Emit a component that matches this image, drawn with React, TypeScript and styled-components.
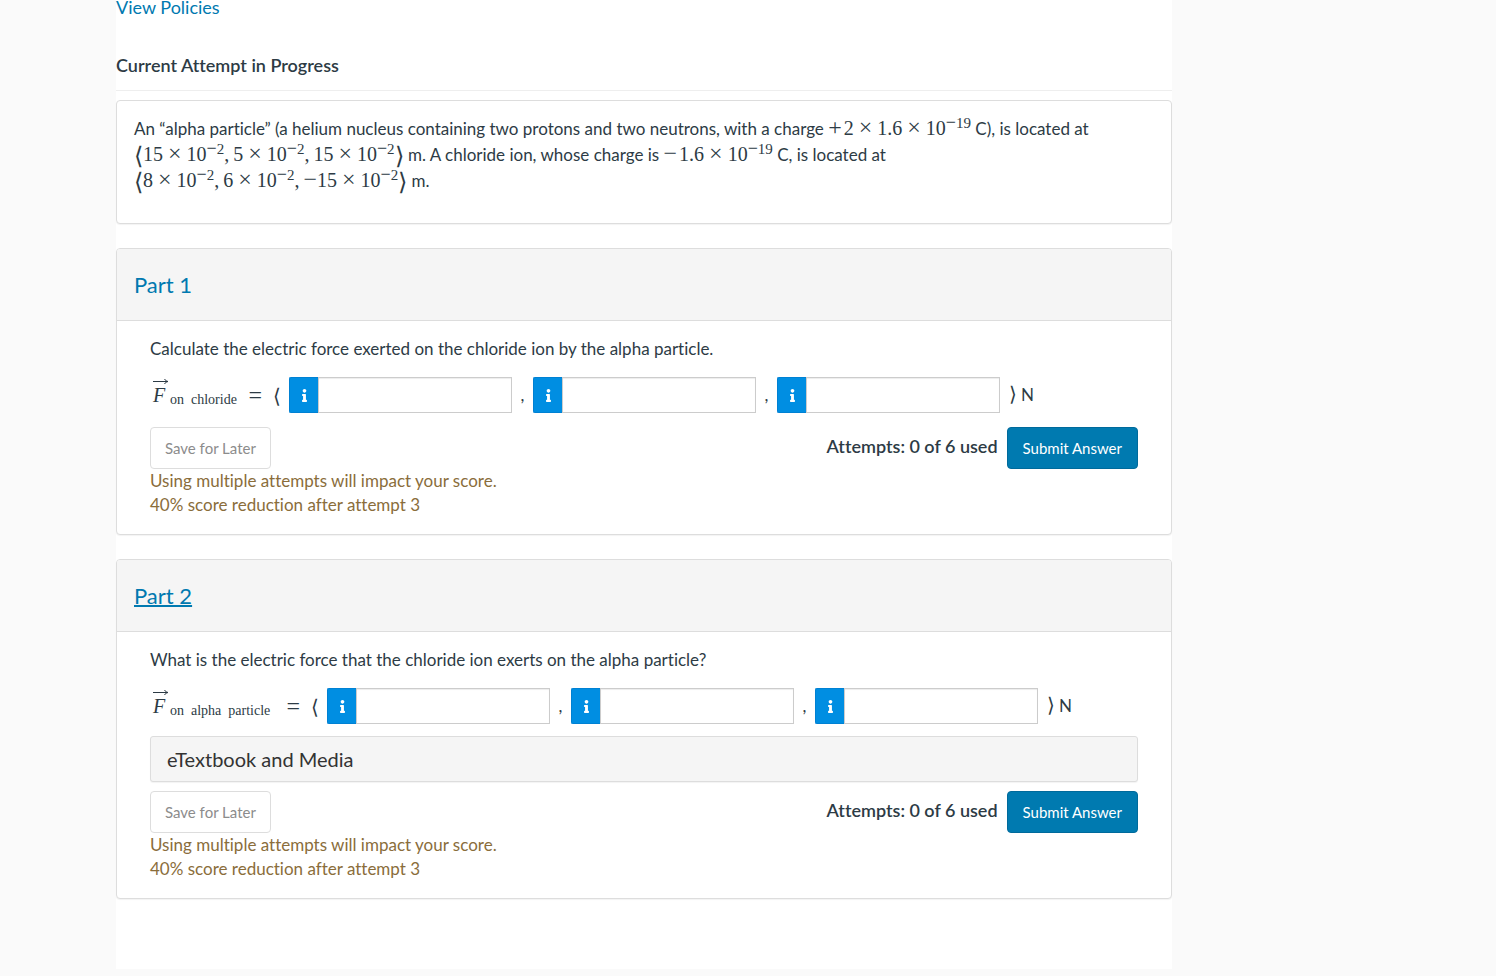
import React from 'react';
import styled, { createGlobalStyle } from 'styled-components';
import { FaInfo } from 'react-icons/fa';

const GlobalStyle = createGlobalStyle`
  * { box-sizing: border-box; }
  body {
    margin: 0;
    background: #fafafa;
    color: #2d3b45;
    font-family: Lato, sans-serif;
    font-size: 17px;
    font-variant-ligatures: none;
    line-height: 24px;
  }
`;

const Page = styled.main`
  margin: 0 324px 7px 116px;
  padding-bottom: 70px;
  background: #fff;
`;

const PolicyLink = styled.a`
  display: block;
  width: fit-content;
  font-size: 18px;
  line-height: 14px;
  color: #0079b0;
  text-decoration: none;
`;

const AttemptHeading = styled.h2`
  margin: 39px 0 9px;
  padding-bottom: 13px;
  border-bottom: 1px solid #eee;
  font-size: 18px;
  font-weight: 600;
  line-height: 24px;
`;

const Card = styled.section`
  margin-bottom: 24px;
  background: #fff;
  border: 1px solid #ddd;
  border-radius: 4px;
  box-shadow: 0 1px 1px rgba(0, 0, 0, 0.05);
  &:last-child { margin-bottom: 0; }
`;

const Statement = styled.p`
  margin: 0;
  padding: 15px 17px 29px;
  line-height: 26px;
`;

const MathText = styled.span`
  font-family: 'Liberation Serif', serif;
  font-size: 20px;
  line-height: 20px;
  white-space: nowrap;
`;

const Operator = styled.span<{ $before?: number; $after?: number }>`
  margin-left: ${(p) => p.$before ?? 0}px;
  margin-right: ${(p) => p.$after ?? 0}px;
  font-size: 24px;
  line-height: 0;
`;

const Separator = styled.span`
  margin-right: 4px;
`;

const Power = styled.sup`
  font-size: 15px;
  line-height: 0;
  vertical-align: 7px;
`;

const PowerSign = styled.span`
  font-size: 18px;
`;

const Bracket = styled.span<{ $large?: boolean }>`
  font-family: 'DejaVu Sans', sans-serif;
  font-weight: 200;
  font-size: ${(p) => (p.$large ? 24 : 20)}px;
  line-height: 0;
  vertical-align: ${(p) => (p.$large ? '-3px' : 'baseline')};
`;

const PartHeader = styled.h3`
  display: flex;
  align-items: center;
  height: 72px;
  margin: 0;
  padding: 0 17px;
  background: #f5f5f5;
  border-bottom: 1px solid #ddd;
  border-radius: 3px 3px 0 0;
  font-size: 22px;
  font-weight: 400;
  line-height: 28px;
`;

const PartLink = styled.a<{ $underlined?: boolean }>`
  color: #0079b0;
  text-decoration: ${(p) => (p.$underlined ? 'underline' : 'none')};
  text-decoration-thickness: 2px;
`;

const PartBody = styled.div`
  padding: 16px 33px 17px;
`;

const Question = styled.p`
  margin: 0 0 16px;
`;

const AnswerRow = styled.div<{ $gap: number }>`
  display: flex;
  align-items: center;
  height: 36px;
  margin-bottom: ${(p) => p.$gap}px;
`;

const Formula = styled.div<{ $wide?: boolean }>`
  display: flex;
  align-items: center;
  width: ${(p) => (p.$wide ? 177 : 139)}px;
  padding-left: 3px;
  font-family: 'Liberation Serif', serif;
  font-size: 20px;
`;

const Vector = styled.span`
  position: relative;
  width: 17px;
  font-style: italic;
`;

const VectorArrow = styled.svg`
  position: absolute;
  top: -5px;
  left: 0;
`;

const Subscript = styled.span`
  display: flex;
  flex: 1;
  gap: 7px;
  padding-top: 9px;
  font-size: 14px;
  line-height: 14px;
`;

const Relation = styled.span`
  display: flex;
  align-items: baseline;
  gap: 11px;
  padding-right: 8px;
`;

const Field = styled.div`
  display: flex;
  width: 223px;
  height: 36px;
`;

const InfoButton = styled.button`
  display: flex;
  align-items: center;
  justify-content: center;
  width: 29px;
  padding: 0;
  border: 1px solid #0081d3;
  border-right: 0;
  border-radius: 2px 0 0 2px;
  background: #008ee2;
  color: #fff;
  font-size: 13px;
`;

const ValueInput = styled.input`
  flex: 1;
  min-width: 0;
  padding: 0 8px;
  border: 1px solid #ccc;
  border-radius: 0;
  background: #fff;
  box-shadow: inset 0 1px 1px rgba(0, 0, 0, 0.075);
  font: inherit;
`;

const Comma = styled.span`
  width: 21px;
  text-align: center;
`;

const Unit = styled.span`
  display: flex;
  align-items: baseline;
  gap: 4px;
  padding-left: 9px;
`;

const MediaButton = styled.button`
  display: block;
  width: 100%;
  height: 46px;
  margin-bottom: 9px;
  padding: 0 16px;
  border: 1px solid #ddd;
  border-radius: 3px;
  background: #f5f5f5;
  box-shadow: 0 1px 1px rgba(0, 0, 0, 0.05);
  color: #333;
  font: inherit;
  font-size: 20px;
  text-align: left;
`;

const Actions = styled.div`
  display: flex;
  align-items: center;
  justify-content: space-between;
`;

const SubmitGroup = styled.div`
  display: flex;
  align-items: center;
  gap: 9px;
`;

const Attempts = styled.strong`
  padding-bottom: 4px;
  font-size: 18px;
  font-weight: 600;
`;

const ActionButton = styled.button<{ $primary?: boolean }>`
  height: 42px;
  padding: 0 ${(p) => (p.$primary ? 15 : 14)}px;
  border: 1px solid ${(p) => (p.$primary ? '#006a9b' : '#ddd')};
  border-radius: 4px;
  background: ${(p) => (p.$primary ? '#007ab0' : '#fff')};
  color: ${(p) => (p.$primary ? '#fff' : '#8c8c8c')};
  font: inherit;
  font-size: 15px;
`;

const Warning = styled.p`
  margin: 0;
  color: #8a6d3b;
`;

function Sci({ base, exp }: { base: string; exp: string }) {
  return (
    <>
      {base}
      <Operator $before={5} $after={5}>×</Operator>10<Power><PowerSign>−</PowerSign>{exp}</Power>
    </>
  );
}

function ForceVector({ words }: { words: string[] }) {
  return (
    <Formula $wide={words.length > 2}>
      <Vector>
        F
        <VectorArrow width="16" height="7" viewBox="0 0 16 7" fill="none" stroke="currentColor" aria-hidden="true">
          <path d="M0 3.5H15M11.5 1C12.3 2.4 13.4 3.1 15 3.5C13.4 3.9 12.3 4.6 11.5 6" />
        </VectorArrow>
      </Vector>
      <Subscript>
        {words.map((word) => (
          <span key={word}>{word}</span>
        ))}
      </Subscript>
      <Relation>
        <Operator>=</Operator>
        <Bracket>⟨</Bracket>
      </Relation>
    </Formula>
  );
}

function Answer({ words, gap }: { words: string[]; gap: number }) {
  return (
    <AnswerRow $gap={gap}>
      <ForceVector words={words} />
      {['x', 'y', 'z'].map((axis, i) => (
        <React.Fragment key={axis}>
          {i > 0 && <Comma>,</Comma>}
          <Field>
            <InfoButton type="button" aria-label={`Help for the ${axis} component`}>
              <FaInfo />
            </InfoButton>
            <ValueInput type="text" aria-label={`Force ${words.join(' ')}, ${axis} component`} />
          </Field>
        </React.Fragment>
      ))}
      <Unit>
        <Bracket>⟩</Bracket>
        <span>N</span>
      </Unit>
    </AnswerRow>
  );
}

function SubmitBar() {
  return (
    <>
      <Actions>
        <ActionButton type="button">Save for Later</ActionButton>
        <SubmitGroup>
          <Attempts>Attempts: 0 of 6 used</Attempts>
          <ActionButton type="submit" $primary>Submit Answer</ActionButton>
        </SubmitGroup>
      </Actions>
      <Warning>Using multiple attempts will impact your score.</Warning>
      <Warning>40% score reduction after attempt 3</Warning>
    </>
  );
}

export default function App() {
  return (
    <>
      <GlobalStyle />
      <Page>
        <PolicyLink href="#policies">View Policies</PolicyLink>
        <AttemptHeading>Current Attempt in Progress</AttemptHeading>
        <Card>
          <Statement>
            An “alpha particle” (a helium nucleus containing two protons and two neutrons, with a charge{' '}
            <MathText>
              <Operator $after={2}>+</Operator>2<Operator $before={5} $after={5}>×</Operator>
              <Sci base="1.6" exp="19" />
            </MathText>{' '}
            C), is located at{' '}
            <MathText>
              <Bracket $large>⟨</Bracket>
              <Sci base="15" exp="2" /><Separator>,</Separator>
              <Sci base="5" exp="2" /><Separator>,</Separator>
              <Sci base="15" exp="2" />
              <Bracket $large>⟩</Bracket>
            </MathText>{' '}
            m. A chloride ion, whose charge is{' '}
            <MathText><Operator $after={2}>−</Operator><Sci base="1.6" exp="19" /></MathText> C, is located at{' '}
            <MathText>
              <Bracket $large>⟨</Bracket>
              <Sci base="8" exp="2" /><Separator>,</Separator>
              <Sci base="6" exp="2" /><Separator>,</Separator>
              <Operator>−</Operator><Sci base="15" exp="2" />
              <Bracket $large>⟩</Bracket>
            </MathText>{' '}
            m.
          </Statement>
        </Card>
        <Card>
          <PartHeader><PartLink href="#part-1">Part 1</PartLink></PartHeader>
          <PartBody>
            <Question>Calculate the electric force exerted on the chloride ion by the alpha particle.</Question>
            <Answer words={['on', 'chloride']} gap={14} />
            <SubmitBar />
          </PartBody>
        </Card>
        <Card>
          <PartHeader><PartLink href="#part-2" $underlined>Part 2</PartLink></PartHeader>
          <PartBody>
            <Question>What is the electric force that the chloride ion exerts on the alpha particle?</Question>
            <Answer words={['on', 'alpha', 'particle']} gap={12} />
            <MediaButton type="button">eTextbook and Media</MediaButton>
            <SubmitBar />
          </PartBody>
        </Card>
      </Page>
    </>
  );
}
